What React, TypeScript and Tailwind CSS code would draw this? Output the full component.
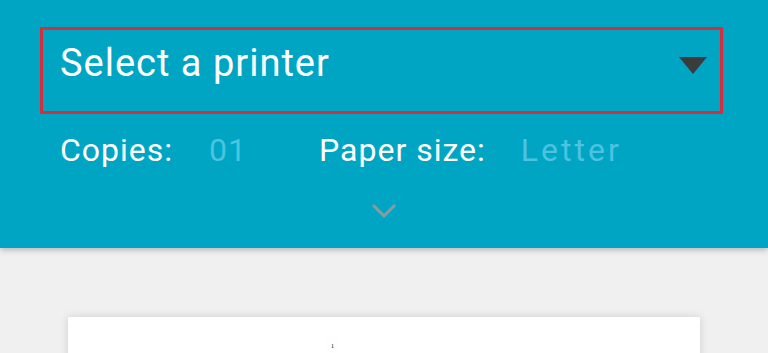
import React from "react";

export default function App() {
  return (
    <div className="w-[768px] h-[353px] overflow-hidden bg-[#f0f0f0] font-['Roboto',sans-serif]">
      <header className="relative z-10 h-[248px] bg-[#00a5c4] shadow-[0_2px_6px_rgba(0,0,0,0.25)] pt-[27px] pl-[40px] pr-[45px]">
        <div className="h-[87px] border-[3px] border-[#d3303d] flex items-start justify-between pl-[17px] pr-[13px]">
          <span className="mt-[14px] text-[38px] tracking-[1px] leading-none text-white">Select a printer</span>
          <svg className="mt-[27px]" width="28" height="18" viewBox="0 0 28 18">
            <path d="M0 0 H28 L14 17 Z" fill="#3b3b3b" />
          </svg>
        </div>
        <div className="flex items-center h-[72px] pl-[20px] text-[32px] leading-none tracking-[1px]">
          <span className="text-white">Copies:</span>
          <span className="ml-[36px] text-[#4cc3e0]">01</span>
          <span className="ml-[72px] text-white">Paper size:</span>
          <span className="ml-[35px] text-[#4cc3e0] tracking-[3px]">Letter</span>
        </div>
        <div className="flex justify-center -ml-[40px] -mr-[45px] mt-[17px]">
          <svg width="26" height="16" viewBox="0 0 26 16">
            <path d="M2 2 L13 13 L24 2" fill="none" stroke="#8a9aa3" strokeWidth="3" />
          </svg>
        </div>
      </header>
      <div className="pt-[69px] px-[68px]">
        <div className="h-[60px] bg-white shadow-[0_0_8px_rgba(0,0,0,0.15)] pt-[26px] pl-[263px] text-[6px] leading-none font-['Liberation_Serif',serif] text-black">
          1
        </div>
      </div>
    </div>
  );
}
